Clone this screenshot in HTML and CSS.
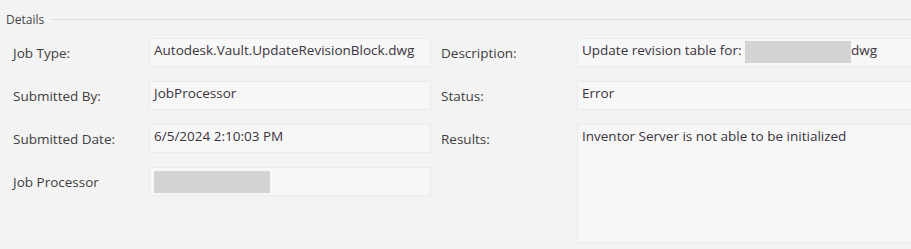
FILE: index.html
```html
<!DOCTYPE html>
<html lang="en">
<head>
  <meta charset="UTF-8">
  <title>Job Details</title>
  <link rel="stylesheet" href="styles.css">
</head>
<body>
  <div class="details">
    <div class="group-title">
      <span>Details</span>
      <div class="group-line"></div>
    </div>

    <div class="grid">
      <div class="label">Job Type:</div>
      <div class="value">Autodesk.Vault.UpdateRevisionBlock.dwg</div>
      <div class="label label-right">Description:</div>
      <div class="value">Update revision table for: <span class="redact redact-desc"></span>dwg</div>

      <div class="label">Submitted By:</div>
      <div class="value">JobProcessor</div>
      <div class="label label-right">Status:</div>
      <div class="value">Error</div>

      <div class="label">Submitted Date:</div>
      <div class="value">6/5/2024 2:10:03 PM</div>
      <div class="label label-right">Results:</div>
      <div class="value results">Inventor Server is not able to be initialized</div>

      <div class="label">Job Processor</div>
      <div class="value"><span class="redact redact-proc"></span></div>
    </div>
  </div>
</body>
</html>
```

FILE: styles.css
```css
/* base */
* { box-sizing: border-box; margin: 0; padding: 0; }
body {
  font-family: "Open Sans", "Noto Sans", sans-serif;
  font-size: 13.5px;
  background: #f3f3f3;
  color: #383838;
  overflow: hidden;
  width: 911px;
  height: 249px;
}
.details {
  padding: 12px 0 0 6px;
}
/* group box header */
.group-title {
  display: flex;
  align-items: flex-start;
  height: 16px;
  line-height: 16px;
  font-size: 12px;
  color: #474747;
}
.group-line {
  flex: 1;
  height: 1px;
  background: #dcdcdc;
  margin: 7px 0 0 8px;
}
/* fields */
.grid {
  display: grid;
  grid-template-columns: 136px 282px 146px 400px;
  grid-template-rows: repeat(4, 29px) 33px;
  row-gap: 14px;
  margin-top: 10px;
  margin-left: 7px;
}
.label {
  padding-top: 6px;
  line-height: 19px;
  color: #404040;
  white-space: nowrap;
}
.label-right {
  padding-left: 10px;
}
.value {
  background: #f7f7f7;
  border: 1px solid #ebebeb;
  padding: 2px 4px;
  line-height: 19px;
  white-space: nowrap;
  color: #3a3440;
}
.results {
  grid-row: 3 / 6;
  grid-column: 4;
}
.redact {
  display: inline-block;
  background: #d4d4d4;
  vertical-align: top;
}
.redact-desc {
  width: 106px;
  height: 22px;
}
.redact-proc {
  width: 116px;
  height: 22px;
  margin-top: 1px;
}
```
